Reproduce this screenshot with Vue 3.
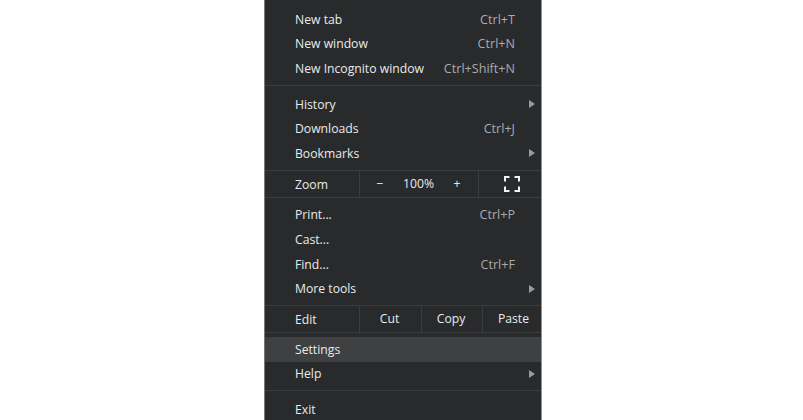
<script setup>
const top = [
  { label: 'New tab', key: 'Ctrl+T' },
  { label: 'New window', key: 'Ctrl+N' },
  { label: 'New Incognito window', key: 'Ctrl+Shift+N' },
]
const mid = [
  { label: 'History', arrow: true },
  { label: 'Downloads', key: 'Ctrl+J' },
  { label: 'Bookmarks', arrow: true },
]
const tools = [
  { label: 'Print...', key: 'Ctrl+P' },
  { label: 'Cast...' },
  { label: 'Find...', key: 'Ctrl+F' },
  { label: 'More tools', arrow: true },
]
</script>

<template>
  <div class="page">
    <div class="menu">
      <div class="section first">
        <div v-for="item in top" :key="item.label" class="row">
          <span>{{ item.label }}</span>
          <span class="key">{{ item.key }}</span>
        </div>
      </div>
      <div class="rule"></div>
      <div class="section second">
        <div v-for="item in mid" :key="item.label" class="row">
          <span>{{ item.label }}</span>
          <span v-if="item.key" class="key">{{ item.key }}</span>
          <span v-if="item.arrow" class="arrow"></span>
        </div>
      </div>

      <div class="strip zoom">
        <span class="strip-label">Zoom</span>
        <div class="zoom-controls">
          <span class="minus">−</span>
          <span class="pct">100%</span>
          <span class="plus">+</span>
        </div>
        <div class="full">
          <svg width="16" height="16" viewBox="0 0 16 16" fill="none" stroke="#f0f0f0" stroke-width="2">
            <path d="M1 5.5V1H5.5M10.5 1H15V5.5M15 10.5V15H10.5M5.5 15H1V10.5" />
          </svg>
        </div>
      </div>

      <div class="section third">
        <div v-for="item in tools" :key="item.label" class="row">
          <span>{{ item.label }}</span>
          <span v-if="item.key" class="key">{{ item.key }}</span>
          <span v-if="item.arrow" class="arrow"></span>
        </div>
      </div>

      <div class="strip edit">
        <span class="strip-label">Edit</span>
        <span class="cell cut">Cut</span>
        <span class="cell copy">Copy</span>
        <span class="cell paste">Paste</span>
      </div>

      <div class="section lower">
        <div class="row hot"><span>Settings</span></div>
        <div class="row"><span>Help</span><span class="arrow"></span></div>
      </div>
      <div class="rule"></div>
      <div class="section exit">
        <div class="row"><span>Exit</span></div>
      </div>
    </div>
  </div>
</template>

<style>
html, body { margin: 0; background: #fff; }
</style>

<style scoped>
.page {
  width: 803px;
  height: 420px;
  overflow: hidden;
  background: #fff;
  display: flex;
  justify-content: center;
  padding-left: 3px;
  box-sizing: border-box;
}
.menu {
  width: 278px;
  height: 420px;
  background: #292a2c;
  border-left: 1px solid #77787a;
  border-right: 1px solid #8f9092;
  box-sizing: border-box;
  color: #e8eaed;
  font-family: "Open Sans", "Noto Sans", sans-serif;
  font-size: 12.2px;
  overflow: hidden;
}
.section.first { padding: 7px 0 4px; }
.section.second { padding: 6px 0 4px; }
.section.third { padding: 5px 0 4px; }
.section.lower { padding: 4px 0 4px; }
.section.exit { padding-top: 6px; }
.row {
  height: 24.6px;
  display: flex;
  align-items: center;
  padding-left: 30px;
  position: relative;
}
.row.hot { background: #3f4042; }
.key {
  position: absolute;
  right: 26px;
  color: #a9abae;
  font-size: 12.6px;
}
.arrow {
  position: absolute;
  right: 6px;
  width: 0;
  height: 0;
  border-left: 6px solid #9a9b9e;
  border-top: 4px solid transparent;
  border-bottom: 4px solid transparent;
}
.rule { height: 1px; background: #3c3d40; }
.strip {
  display: flex;
  align-items: center;
  border-top: 1px solid #3c3d40;
  border-bottom: 1px solid #3c3d40;
  box-sizing: border-box;
}
.zoom { height: 28px; }
.edit { height: 28px; }
.strip-label {
  width: 94px;
  padding: 1px 0 0 30px;
  box-sizing: border-box;
  flex: none;
}
.zoom-controls {
  width: 120px;
  height: 100%;
  flex: none;
  border-left: 1px solid #3c3d40;
  border-right: 1px solid #3c3d40;
  display: flex;
  align-items: center;
  box-sizing: border-box;
}
.minus { width: 40px; text-align: center; }
.pct { width: 37px; text-align: center; }
.plus { width: 40px; text-align: center; }
.full { flex: 1; display: flex; justify-content: center; align-items: center; padding-left: 4px; }
.cell {
  height: 100%;
  display: flex;
  align-items: center;
  justify-content: center;
  border-left: 1px solid #3c3d40;
  box-sizing: border-box;
}
.cut { width: 62px; padding-right: 2px; }
.copy { width: 61px; padding-right: 2px; }
.paste { flex: 1; padding-left: 3px; }
</style>
